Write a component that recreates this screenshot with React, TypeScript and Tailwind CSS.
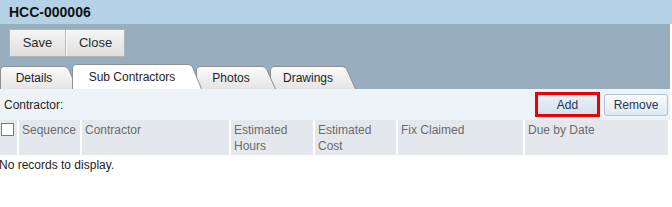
import React from 'react';

type TabProps = {
  label: string;
  width: number;
  active?: boolean;
  z: string;
  first?: boolean;
};

const Tab = ({ label, width, active, z, first }: TabProps) => {
  const h = active ? 25 : 23;
  const w = width;
  const d = `M0.5 ${h} V4 Q0.5 0.5 4 0.5 H${w - 14} Q${w - 11} 0.5 ${w - 9.5} 3 L${w - 0.5} ${h}`;
  return (
    <div
      className={`relative ${z} ${first ? '' : '-ml-[6px]'} ${active ? 'h-[25px]' : 'h-[23px]'}`}
      style={{ width: w }}
    >
      <svg className="absolute inset-0" width={w} height={h}>
        <defs>
          <linearGradient id={`g-${label}`} x1="0" y1="0" x2="0" y2="1">
            <stop offset="0" stopColor="#fbfbfb" />
            <stop offset="1" stopColor="#e4e4e4" />
          </linearGradient>
        </defs>
        <path d={d + ' Z'} fill={active ? '#ffffff' : `url(#g-${label})`} stroke="none" />
        <path d={d} fill="none" stroke="#8f8f8f" strokeWidth="1" />
      </svg>
      <div
        className="relative flex h-full items-center justify-center text-[#1e1e1e]"
        style={{ width: w - 10 }}
      >
        {label}
      </div>
    </div>
  );
};

const columns = [
  { label: 'Sequence', w: 'w-[61px]' },
  { label: 'Contractor', w: 'w-[147px]' },
  { label: 'Estimated Hours', w: 'w-[82px]' },
  { label: 'Estimated Cost', w: 'w-[81px]' },
  { label: 'Fix Claimed', w: 'w-[125px]' },
  { label: 'Due by Date', w: 'w-[143px]' },
];

export default function App() {
  return (
    <div className="h-[207px] w-[672px] overflow-hidden bg-white font-['Liberation_Sans',Arial,sans-serif] text-[12px] leading-[16px]">
      <div className="flex h-[24px] items-center bg-[#b4d2e6] pl-[9px] text-[14px] font-bold text-[#111]">
        HCC-000006
      </div>

      <div className="flex h-[65px] w-[670px] flex-col bg-[#98aebf]">
        <div className="flex pl-[9px] pt-[5px]">
          <div className="flex h-[28px] border border-[#b3b3b3] bg-gradient-to-b from-[#f6f6f6] to-[#dedede] text-[13px] text-[#2a2a2a]">
            <button className="w-[56px] border-r border-[#b8b8b8]">Save</button>
            <button className="w-[58px] border-l border-white">Close</button>
          </div>
        </div>
        <div className="mt-auto flex h-[25px] items-end">
          <Tab label="Details" width={78} z="z-30" first />
          <Tab label="Sub Contractors" width={130} z="z-40" active />
          <Tab label="Photos" width={80} z="z-20" />
          <Tab label="Drawings" width={86} z="z-10" />
        </div>
      </div>

      <div className="w-[670px] bg-[#eef3fa]">
        <div className="flex h-[31px] items-center pr-[2px]">
          <span className="pl-[4px] text-[#1e1e1e]">Contractor:</span>
          <div className="ml-auto flex items-center gap-[4px]">
            <div className="flex h-[25px] w-[65px] border-[3px] border-[#ee0000]">
              <button className="h-full w-full bg-gradient-to-b from-[#eaf1f8] to-[#d5e2ef] text-[#1d3557]">
                Add
              </button>
            </div>
            <button className="h-[22px] w-[64px] rounded-[3px] border border-[#b2c3d6] bg-gradient-to-b from-[#fbfcfe] to-[#dfe8f2] text-[#1d3557]">
              Remove
            </button>
          </div>
        </div>

        <div className="flex h-[35px] gap-[2px] bg-white text-[#6b6b6b]">
          <div className="flex w-[17px] items-start bg-[#e4e8ed] pl-[1px] pt-[3px]">
            <span className="block h-[13px] w-[13px] border border-[#7a7a7a] bg-white" />
          </div>
          {columns.map((c) => (
            <div key={c.label} className={`${c.w} bg-[#e4e8ed] pl-[3px] pr-[20px] pt-[2px]`}>
              {c.label}
            </div>
          ))}
        </div>
      </div>

      <div className="-ml-[1px] pt-[2px] text-[#1e1e1e]">No records to display.</div>
    </div>
  );
}
